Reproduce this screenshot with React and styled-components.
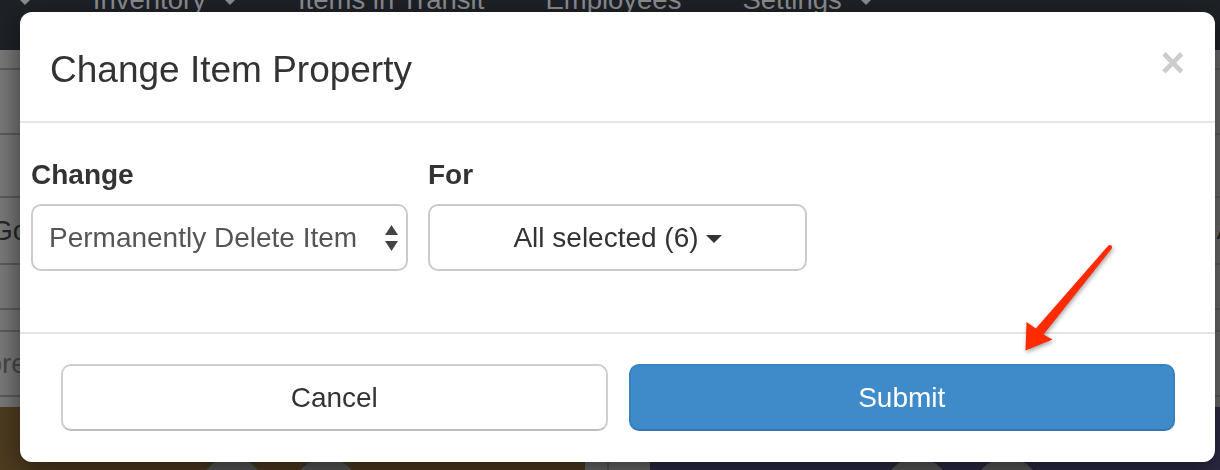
import React from "react";
import styled, { createGlobalStyle } from "styled-components";

const GlobalStyle = createGlobalStyle`
  html, body {
    margin: 0;
    padding: 0;
    width: 1220px;
    height: 470px;
    overflow: hidden;
    background: #6b6b6b;
    font-family: "Liberation Sans", Arial, sans-serif;
  }
  * { box-sizing: border-box; }
`;

const navItems = [
  { label: "Catalog", caret: true },
  { label: "Inventory", caret: true },
  { label: "Items in Transit" },
  { label: "Employees" },
  { label: "Settings", caret: true },
];

const rows = [
  { h: 20 },
  { h: 65 },
  { h: 63 },
  { h: 67, left: "Go", right: "A" },
  { h: 45 },
  { h: 22 },
  { h: 65, left: "Store", faint: true },
];

const App = () => {
  return (
    <>
      <GlobalStyle />
      <Page>
        <NavBar>
          <NavList>
            {navItems.map((item) => (
              <NavItem key={item.label}>
                {item.label}
                {item.caret && <NavCaret />}
              </NavItem>
            ))}
          </NavList>
        </NavBar>

        {rows.map((r, i) => (
          <Row key={i} $h={r.h}>
            {r.left && <RowText $faint={r.faint}>{r.left}</RowText>}
            {r.right && <RowEdge>{r.right}</RowEdge>}
          </Row>
        ))}

        <Cards>
          <Card $bg="#4f3c20" $w={585}>
            <Avatar $left={198} />
            <Avatar $left={292} />
          </Card>
          <CardGap />
          <Card $bg="#2d2b46" $w={570}>
            <Avatar $left={233} />
            <Avatar $left={323} />
          </Card>
        </Cards>
      </Page>

      <Overlay>
        <Modal>
          <Header>
            <Title>Change Item Property</Title>
            <Close aria-label="Close">×</Close>
          </Header>

          <Body>
            <Field $w={377}>
              <Label>Change</Label>
              <SelectBox>
                <span>Permanently Delete Item</span>
                <svg width="13" height="26" viewBox="0 0 13 26">
                  <path d="M6.5 0 L13 10 L0 10 Z" fill="#444" />
                  <path d="M0 16 L13 16 L6.5 26 Z" fill="#444" />
                </svg>
              </SelectBox>
            </Field>
            <Field $w={379}>
              <Label>For</Label>
              <DropButton>
                All selected (6)
                <Caret />
              </DropButton>
            </Field>
          </Body>

          <Footer>
            <Button>Cancel</Button>
            <Button $primary>Submit</Button>
          </Footer>
        </Modal>

        <Pointer viewBox="0 0 1220 470" width="1220" height="470">
          <polygon
            points="1108.4,245.6 1111.8,248.6 1043.5,334.5 1052.5,339.5 1025.5,350.5 1026.5,322 1035.8,328.6"
            fill="#fe2a00"
          />
          <circle cx="1110" cy="247" r="2" fill="#fe2a00" />
        </Pointer>
      </Overlay>
    </>
  );
};
export default App;

const Page = styled.div`
  width: 1220px;
  height: 470px;
  overflow: hidden;
  display: flex;
  flex-direction: column;
  background: linear-gradient(90deg, #7a7a7a 0px, #6b6b6b 60px);
`;

const NavBar = styled.div`
  height: 50px;
  flex: none;
  background: #1e2126;
  overflow: hidden;
`;

const NavList = styled.div`
  display: flex;
  gap: 61px;
  margin-left: -94px;
  margin-top: -14px;
`;

const NavItem = styled.div`
  display: flex;
  align-items: center;
  font-size: 27.5px;
  line-height: 27px;
  color: #8b8d91;
  white-space: nowrap;
`;

const NavCaret = styled.span`
  display: inline-block;
  margin-left: 17px;
  margin-top: 4px;
  border-left: 7px solid transparent;
  border-right: 7px solid transparent;
  border-top: 7px solid #8b8d91;
`;

const Row = styled.div`
  height: ${(p) => p.$h}px;
  flex: none;
  display: flex;
  align-items: center;
  justify-content: space-between;
  border-bottom: 2px solid #5b5b5b;
`;

const RowText = styled.span`
  margin-left: ${(p) => (p.$faint ? "-40px" : "-9px")};
  font-size: 28px;
  color: ${(p) => (p.$faint ? "#474747" : "#262626")};
`;

const RowEdge = styled.span`
  margin-right: -14px;
  font-size: 26px;
  color: #202020;
`;

const Cards = styled.div`
  margin-top: 10px;
  flex: 1;
  display: flex;
`;

const Card = styled.div`
  position: relative;
  width: ${(p) => p.$w}px;
  flex: none;
  background: ${(p) => p.$bg};
`;

const CardGap = styled.div`
  width: 65px;
  flex: none;
  background: linear-gradient(90deg, #6b6b6b 22px, #5a5a5a 22px, #5a5a5a 24px, #6b6b6b 24px);
`;

const Avatar = styled.span`
  position: absolute;
  top: 51px;
  left: ${(p) => p.$left}px;
  width: 68px;
  height: 68px;
  border-radius: 50%;
  background: #595959;
`;

const Overlay = styled.div`
  position: fixed;
  inset: 0;
  padding: 12px 5px 0 20px;
`;

const Modal = styled.div`
  width: 1195px;
  background: #fff;
  border-radius: 12px;
  box-shadow: 0 8px 28px rgba(0, 0, 0, 0.5);
  display: flex;
  flex-direction: column;
`;

const Header = styled.div`
  display: flex;
  justify-content: space-between;
  align-items: flex-start;
  padding: 32px 30px 26px 30px;
  border-bottom: 2px solid #e5e5e5;
`;

const Title = styled.h4`
  margin: 0;
  font-size: 37px;
  line-height: 51px;
  font-weight: 400;
  color: #333;
`;

const Close = styled.button`
  margin-top: -2px;
  padding: 0;
  border: 0;
  background: none;
  font-family: "Liberation Sans", Arial, sans-serif;
  font-size: 42px;
  line-height: 42px;
  font-weight: 700;
  color: #cccccc;
  cursor: pointer;
`;

const Body = styled.div`
  display: flex;
  gap: 20px;
  padding: 32px 11px 61px 11px;
  border-bottom: 2px solid #e5e5e5;
`;

const Field = styled.div`
  width: ${(p) => p.$w}px;
  display: flex;
  flex-direction: column;
`;

const Label = styled.label`
  font-size: 28px;
  line-height: 40px;
  font-weight: 700;
  color: #333;
  margin-bottom: 9px;
`;

const SelectBox = styled.div`
  height: 67px;
  display: flex;
  align-items: center;
  justify-content: space-between;
  padding: 0 8px 0 16px;
  border: 2px solid #cbcbcb;
  border-radius: 10px;
  font-size: 28px;
  color: #555;
  background: #fff;
`;

const DropButton = styled.div`
  height: 67px;
  display: flex;
  align-items: center;
  justify-content: center;
  border: 2px solid #cbcbcb;
  border-radius: 10px;
  font-size: 28px;
  color: #333;
  background: #fff;
`;

const Caret = styled.span`
  display: inline-block;
  margin-left: 7px;
  margin-top: 2px;
  border-left: 8px solid transparent;
  border-right: 8px solid transparent;
  border-top: 8px solid #333;
`;

const Footer = styled.div`
  display: flex;
  gap: 21px;
  padding: 30px 40px 31px 41px;
`;

const Button = styled.button`
  flex: 1;
  height: 67px;
  border-radius: 10px;
  font-family: "Liberation Sans", Arial, sans-serif;
  font-size: 28px;
  cursor: pointer;
  color: ${(p) => (p.$primary ? "#fff" : "#333")};
  background: ${(p) => (p.$primary ? "#3f8ac8" : "#fff")};
  border: 2px solid ${(p) => (p.$primary ? "#3a81bf" : "#cfcfcf")};
  border-bottom-color: ${(p) => (p.$primary ? "#3476b2" : "#bdbdbd")};
`;

const Pointer = styled.svg`
  position: absolute;
  left: 0;
  top: 0;
  pointer-events: none;
  filter: drop-shadow(1px 2px 2px rgba(0, 0, 0, 0.35));
`;
